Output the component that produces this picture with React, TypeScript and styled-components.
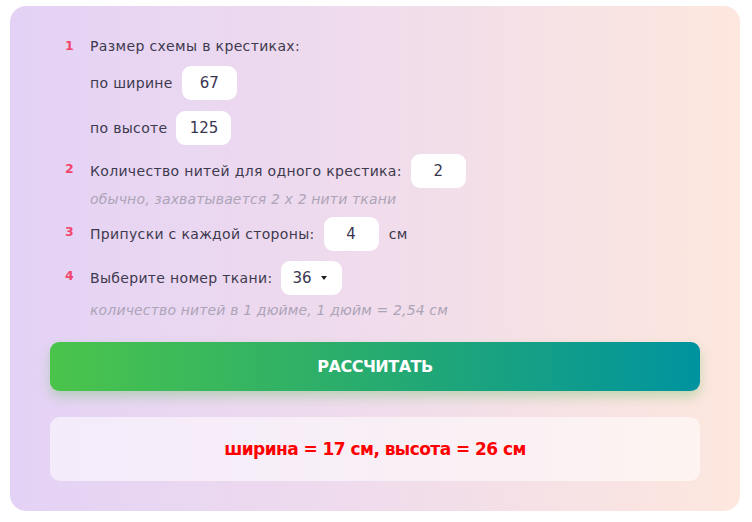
import React from "react";
import styled, { createGlobalStyle } from "styled-components";

const Global = createGlobalStyle`
  html, body { margin: 0; padding: 0; background: #ffffff; }
  body { font-family: "DejaVu Sans", "Noto Sans", sans-serif; }
  * { box-sizing: border-box; }
`;

const Page = styled.div`
  padding: 6px 12px 11px 10px;
`;

const Card = styled.div`
  width: 730px;
  height: 505px;
  border-radius: 16px;
  background: linear-gradient(90deg, #e4d2f6 0%, #f0dcec 50%, #fde7de 100%);
  padding: 30px 40px 30px 40px;
  display: flex;
  flex-direction: column;
`;

const Steps = styled.div`
  display: flex;
  flex-direction: column;
  padding-left: 15px;
`;

const Step = styled.div<{ $mt?: number }>`
  display: grid;
  grid-template-columns: 25px 1fr;
  margin-top: ${(p) => p.$mt ?? 0}px;
`;

const Num = styled.div<{ $pt?: number }>`
  color: #f2456b;
  font-weight: 700;
  font-size: 12.5px;
  line-height: 20px;
  padding-top: ${(p) => p.$pt ?? 0}px;
`;

const Body = styled.div`
  display: flex;
  flex-direction: column;
`;

const Title = styled.div`
  color: #3e3a4e;
  font-size: 14px;
  line-height: 20px;
  letter-spacing: 0.35px;
`;

const Line = styled.div<{ $mt?: number }>`
  display: flex;
  align-items: center;
  gap: 9px;
  height: 34px;
  margin-top: ${(p) => p.$mt ?? 0}px;
  color: #3e3a4e;
  font-size: 14px;
  letter-spacing: 0.33px;
`;

const Field = styled.div`
  width: 55px;
  height: 34px;
  border-radius: 9px;
  background: #ffffff;
  display: flex;
  align-items: center;
  justify-content: center;
  color: #3a3650;
  font-size: 15px;
  letter-spacing: 0;
`;

const Select = styled.div`
  width: 61px;
  height: 34px;
  border-radius: 9px;
  background: #ffffff;
  display: flex;
  align-items: center;
  padding-left: 11px;
  gap: 9px;
  color: #3a3650;
  font-size: 15px;
  letter-spacing: 0;
`;

const Caret = styled.span`
  width: 0;
  height: 0;
  border-left: 3.5px solid transparent;
  border-right: 3.5px solid transparent;
  border-top: 4px solid #1f1f1f;
`;

const Unit = styled.span`
  margin-left: 1px;
`;

const Hint = styled.div<{ $mt?: number }>`
  color: #ada4b7;
  font-style: italic;
  font-size: 14px;
  line-height: 18px;
  letter-spacing: 0.15px;
  margin-top: ${(p) => p.$mt ?? 0}px;
`;

const Button = styled.button`
  margin-top: 23px;
  height: 49px;
  width: 100%;
  border: none;
  border-radius: 9px;
  background: linear-gradient(90deg, #4bc44b 0%, #27ab6f 50%, #00939f 100%);
  box-shadow: 0 6px 12px rgba(95, 190, 90, 0.35);
  color: #ffffff;
  font-family: inherit;
  font-weight: 700;
  font-size: 16px;
  letter-spacing: -0.5px;
  cursor: pointer;
`;

const Result = styled.div`
  margin-top: 26px;
  height: 64px;
  border-radius: 10px;
  background: rgba(255, 255, 255, 0.55);
  display: flex;
  align-items: center;
  justify-content: center;
  color: #ff0000;
  font-weight: 700;
  font-size: 17px;
  letter-spacing: -0.55px;
`;

export default function App() {
  return (
    <>
      <Global />
      <Page>
        <Card>
          <Steps>
            <Step>
              <Num>1</Num>
              <Body>
                <Title>Размер схемы в крестиках:</Title>
                <Line $mt={10}>
                  по ширине <Field>67</Field>
                </Line>
                <Line $mt={11}>
                  по высоте <Field>125</Field>
                </Line>
              </Body>
            </Step>
            <Step $mt={9}>
              <Num $pt={5}>2</Num>
              <Body>
                <Line>
                  Количество нитей для одного крестика: <Field>2</Field>
                </Line>
                <Hint $mt={2}>обычно, захватывается 2 x 2 нити ткани</Hint>
              </Body>
            </Step>
            <Step $mt={9}>
              <Num $pt={5}>3</Num>
              <Body>
                <Line>
                  Припуски с каждой стороны: <Field>4</Field>
                  <Unit>см</Unit>
                </Line>
              </Body>
            </Step>
            <Step $mt={10}>
              <Num $pt={5}>4</Num>
              <Body>
                <Line>
                  Выберите номер ткани:
                  <Select>
                    36 <Caret />
                  </Select>
                </Line>
                <Hint $mt={6}>количество нитей в 1 дюйме, 1 дюйм = 2,54 см</Hint>
              </Body>
            </Step>
          </Steps>
          <Button>РАССЧИТАТЬ</Button>
          <Result>ширина = 17 см, высота = 26 см</Result>
        </Card>
      </Page>
    </>
  );
}
